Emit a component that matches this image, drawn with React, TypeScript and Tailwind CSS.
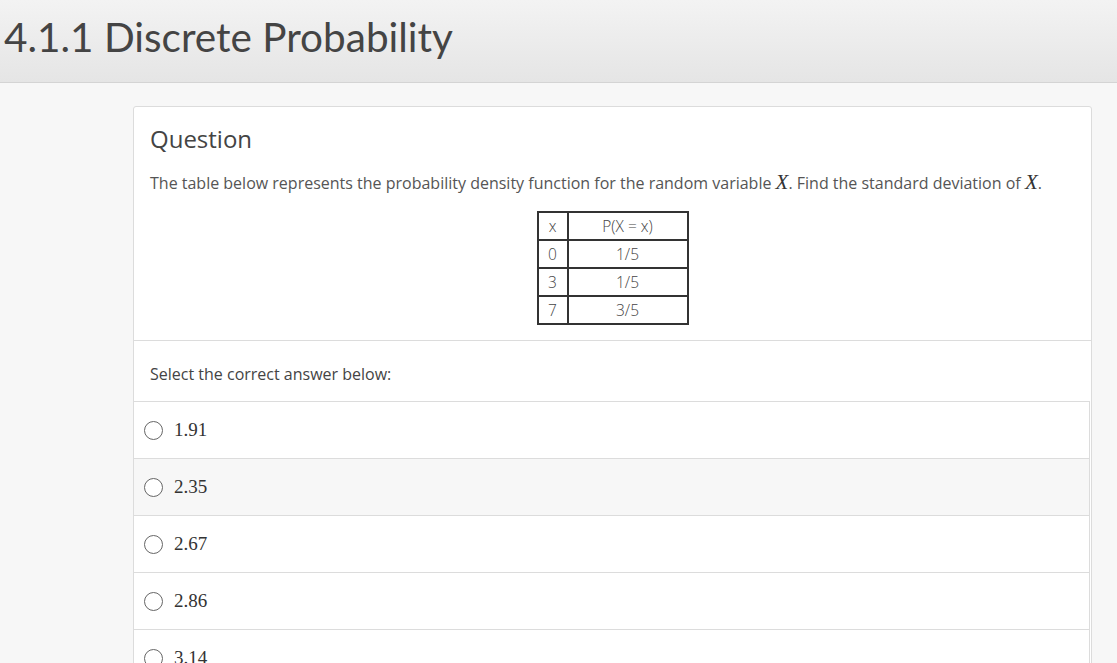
// App.tsx
const options = ['1.91', '2.35', '2.67', '2.86', '3.14']

const rows = [
  { x: '0', p: '1/5' },
  { x: '3', p: '1/5' },
  { x: '7', p: '3/5' },
]

function MathX() {
  return <span className="font-['Liberation_Serif',serif] italic text-[21px] leading-[20px] text-[#333]">X</span>
}

export default function App() {
  return (
    <div className="min-h-screen bg-[#f7f7f7] font-['Open_Sans',sans-serif]">
      {/* Page header */}
      <div className="h-[83px] border-b border-[#d4d4d4] bg-gradient-to-b from-[#f3f3f3] to-[#e5e5e5] pl-[4px] pt-[13px]">
        <h1 className="font-['Lato',sans-serif] text-[40.5px] leading-[48px] text-[#444]">4.1.1 Discrete Probability</h1>
      </div>

      {/* Question card */}
      <div className="ml-[133px] mr-[25px] mt-[23px] rounded-[3px] border border-[#dcdcdc] bg-white">
        <div className="px-[16px] pt-[16px] pb-[15px]">
          <h2 className="text-[24px] leading-[32px] text-[#444]">Question</h2>
          <p className="mt-[16px] text-[16px] leading-[24px] text-[#555]">
            The table below represents the probability density function for the random variable <MathX />. Find the standard deviation of <MathX />.
          </p>
          <div className="mt-[16px] flex justify-center">
            <table className="border-collapse border-2 border-[#333] text-[15.5px] font-light leading-[20px] text-[#444]">
              <tbody>
                <tr className="h-[28px]">
                  <td className="w-[30px] border-2 border-[#333] text-center">x</td>
                  <td className="w-[120px] border-2 border-[#333] text-center">P(X = x)</td>
                </tr>
                {rows.map((r) => (
                  <tr key={r.x} className="h-[28px]">
                    <td className="border-2 border-[#333] text-center">{r.x}</td>
                    <td className="border-2 border-[#333] text-center">{r.p}</td>
                  </tr>
                ))}
              </tbody>
            </table>
          </div>
        </div>

        <div className="border-t border-[#dcdcdc] px-[16px] pt-[21px] pb-[15px]">
          <p className="text-[16px] leading-[24px] text-[#444]">Select the correct answer below:</p>
        </div>

        {/* Answer options */}
        <div className="mr-[1px] border-r border-[#dcdcdc]">
          {options.map((o, i) => (
            <div
              key={o}
              className={`flex h-[57px] items-center gap-[11px] border-t border-[#dcdcdc] pl-[10px] ${i === 1 ? 'bg-[#f7f7f7]' : 'bg-white'}`}
            >
              <span className="h-[19px] w-[19px] rounded-full border-[1.5px] border-[#666] bg-white" />
              <span className="font-['Liberation_Serif',serif] text-[19px] text-[#333]">{o}</span>
            </div>
          ))}
        </div>
      </div>
    </div>
  )
}
